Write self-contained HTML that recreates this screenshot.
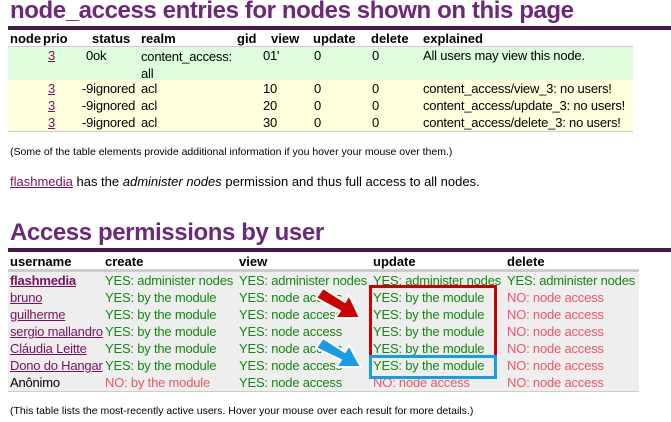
<!DOCTYPE html>
<html><head><meta charset="utf-8"><style>
body{margin:0;width:671px;height:422px;background:#fff;font-family:"Liberation Sans",sans-serif;position:relative;overflow:hidden}
div{position:absolute;white-space:nowrap}
.h{font-family:"Liberation Sans",sans-serif;font-weight:bold;font-size:24px;color:#6a2a78;left:10px;letter-spacing:-0.4px}
.bar{left:8px;right:0;height:4px;background:#4a1848}
.th{font-weight:bold;font-size:13px;top:0}
.r{left:8px;height:17px;border-bottom:1px solid #ccc;font-size:13px;letter-spacing:-0.2px}
.r div{top:1px}
a{color:#7a1060;text-decoration:underline}
.g{color:#118811}.n{color:#ee5566}
.s{font-size:10.5px}
</style></head><body>
<div class="h" style="top:-3px">node_access entries for nodes shown on this page</div>
<div class="bar" style="top:26px"></div>
<div style="top:31px;left:0;width:671px;height:15px">
<div class="th" style="left:10px">node</div><div class="th" style="left:43px">prio</div><div class="th" style="left:92px">status</div><div class="th" style="left:141px">realm</div><div class="th" style="left:237px">gid</div><div class="th" style="left:271px">view</div><div class="th" style="left:313px">update</div><div class="th" style="left:371px">delete</div><div class="th" style="left:423px">explained</div></div>
<div class="r" style="top:46px;height:33px;width:625px;background:#ddfddd;border-top:1px solid #ccc">
<div style="left:40px"><a>3</a></div><div style="left:78px">0ok</div><div style="left:133px;line-height:17px">content_access:<br>all</div><div style="left:255px">01'</div><div style="left:306px">0</div><div style="left:364px">0</div><div style="left:415px">All users may view this node.</div></div>
<div class="r" style="top:80px;width:625px;background:#ffffdd"><div style="left:40px"><a>3</a></div><div style="left:74px">-9ignored</div><div style="left:133px">acl</div><div style="left:255px">10</div><div style="left:306px">0</div><div style="left:364px">0</div><div style="left:415px">content_access/view_3: no users!</div></div>
<div class="r" style="top:97px;width:625px;background:#ffffdd"><div style="left:40px"><a>3</a></div><div style="left:74px">-9ignored</div><div style="left:133px">acl</div><div style="left:255px">20</div><div style="left:306px">0</div><div style="left:364px">0</div><div style="left:415px">content_access/update_3: no users!</div></div>
<div class="r" style="top:114px;width:625px;background:#ffffdd"><div style="left:40px"><a>3</a></div><div style="left:74px">-9ignored</div><div style="left:133px">acl</div><div style="left:255px">30</div><div style="left:306px">0</div><div style="left:364px">0</div><div style="left:415px">content_access/delete_3: no users!</div></div>
<div class="s" style="top:146px;left:10px">(Some of the table elements provide additional information if you hover your mouse over them.)</div>
<div style="top:174px;left:10px;font-size:13px"><a>flashmedia</a> has the <i>administer nodes</i> permission and thus full access to all nodes.</div>
<div class="h" style="top:219px">Access permissions by user</div>
<div class="bar" style="top:248px"></div>
<div style="top:254px;left:0;width:671px;height:15px">
<div class="th" style="left:10px">username</div><div class="th" style="left:105px">create</div><div class="th" style="left:239px">view</div><div class="th" style="left:373px">update</div><div class="th" style="left:507px">delete</div></div>
<div style="top:269px;left:8px;width:631px;height:3px;background:#ccc"></div>
<div class="r" style="top:272px;width:631px;background:#eee"><div style="left:2px;font-weight:bold"><a>flashmedia</a></div><div class="g" style="left:97px">YES: administer nodes</div><div class="g" style="left:231px">YES: administer nodes</div><div class="g" style="left:365px">YES: administer nodes</div><div class="g" style="left:499px">YES: administer nodes</div></div>
<div class="r" style="top:289px;width:631px;background:#eee"><div style="left:2px"><a>bruno</a></div><div class="g" style="left:97px">YES: by the module</div><div class="g" style="left:231px">YES: node access</div><div class="g" style="left:365px">YES: by the module</div><div class="n" style="left:499px">NO: node access</div></div>
<div class="r" style="top:306px;width:631px;background:#eee"><div style="left:2px"><a>guilherme</a></div><div class="g" style="left:97px">YES: by the module</div><div class="g" style="left:231px">YES: node access</div><div class="g" style="left:365px">YES: by the module</div><div class="n" style="left:499px">NO: node access</div></div>
<div class="r" style="top:323px;width:631px;background:#eee"><div style="left:2px"><a>sergio mallandro</a></div><div class="g" style="left:97px">YES: by the module</div><div class="g" style="left:231px">YES: node access</div><div class="g" style="left:365px">YES: by the module</div><div class="n" style="left:499px">NO: node access</div></div>
<div class="r" style="top:340px;width:631px;background:#eee"><div style="left:2px"><a>Cláudia Leitte</a></div><div class="g" style="left:97px">YES: by the module</div><div class="g" style="left:231px">YES: node access</div><div class="g" style="left:365px">YES: by the module</div><div class="n" style="left:499px">NO: node access</div></div>
<div class="r" style="top:357px;width:631px;background:#eee"><div style="left:2px"><a>Dono do Hangar</a></div><div class="g" style="left:97px">YES: by the module</div><div class="g" style="left:231px">YES: node access</div><div class="g" style="left:365px">YES: by the module</div><div class="n" style="left:499px">NO: node access</div></div>
<div class="r" style="top:374px;width:631px;background:#eee"><div style="left:2px">Anônimo</div><div class="n" style="left:97px">NO: by the module</div><div class="g" style="left:231px">YES: node access</div><div class="n" style="left:365px">NO: node access</div><div class="n" style="left:499px">NO: node access</div></div>
<div class="s" style="top:405px;left:10px">(This table lists the most-recently active users. Hover your mouse over each result for more details.)</div>
<div style="left:369px;top:285px;width:122px;height:67px;border:3px solid #cc0000"></div>
<div style="left:369px;top:355px;width:122px;height:18px;border:3px solid #1a9be8"></div>
<svg style="position:absolute;left:0;top:0" width="671" height="422">
<g stroke="#fff" stroke-width="2" stroke-linejoin="round">
<polygon points="316,298 323,288 345,302 349,295 360,318 335,318 340,311" fill="#cc0000"/>
<polygon points="316,348 323,338 345,352 349,345 361,367 336,367 341,360" fill="#1a9be8"/>
</g></svg>
</body></html>
